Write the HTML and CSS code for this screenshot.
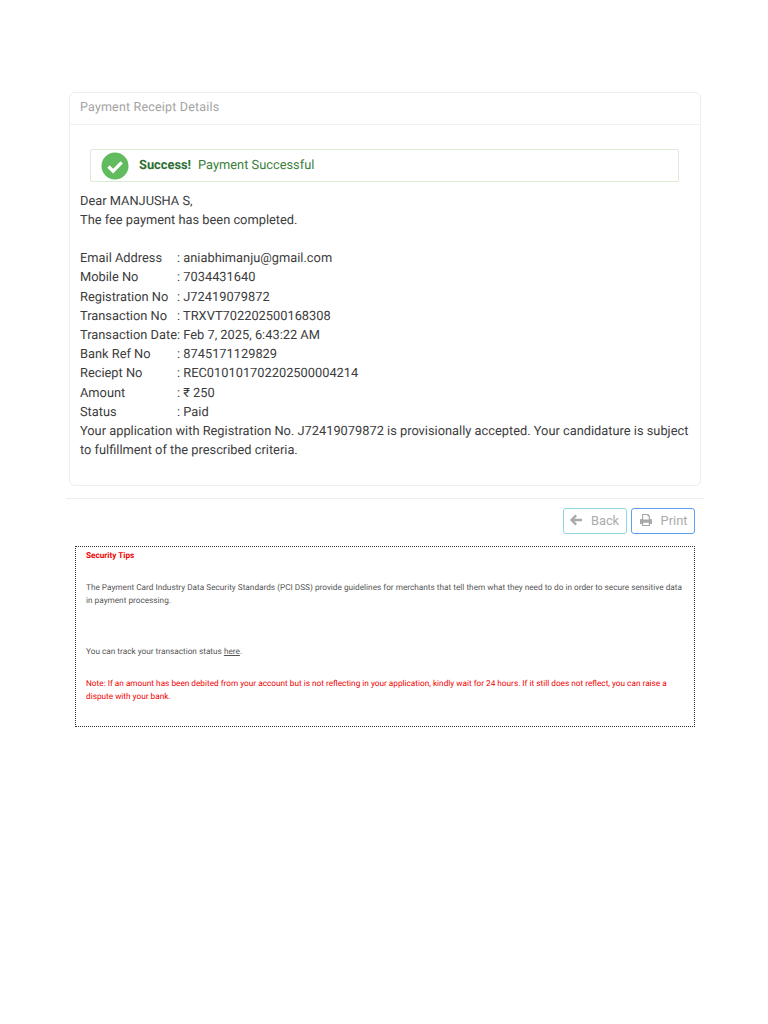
FILE: index.html
```html
<!DOCTYPE html>
<html lang="en">
<head>
<meta charset="utf-8">
<title>Payment Receipt Details</title>
<link rel="stylesheet" href="styles.css">
</head>
<body>
<main class="page">
  <section class="card">
    <h1 class="card-header">Payment Receipt Details</h1>
    <div class="card-body">
      <div class="alert">
        <svg class="alert-icon" viewBox="0 0 28 28" aria-hidden="true"><circle cx="14" cy="14" r="13.5" fill="#62bb5f"/><path d="M7.5 14.5l4.600 4.600 8.600-8.800" fill="none" stroke="#fff" stroke-width="3.2"/></svg>
        <strong>Success!</strong>
        <span>Payment Successful</span>
      </div>
      <p class="line">Dear MANJUSHA S,</p>
      <p class="line">The fee payment has been completed.</p>
      <p class="line">&nbsp;</p>
      <dl class="details">
        <div class="row"><dt>Email Address</dt><dd>: aniabhimanju@gmail.com</dd></div>
        <div class="row"><dt>Mobile No</dt><dd>: 7034431640</dd></div>
        <div class="row"><dt>Registration No</dt><dd>: J72419079872</dd></div>
        <div class="row"><dt>Transaction No</dt><dd>: TRXVT702202500168308</dd></div>
        <div class="row"><dt>Transaction Date</dt><dd>: Feb 7, 2025, 6:43:22 AM</dd></div>
        <div class="row"><dt>Bank Ref No</dt><dd>: 8745171129829</dd></div>
        <div class="row"><dt>Reciept No</dt><dd>: REC010101702202500004214</dd></div>
        <div class="row"><dt>Amount</dt><dd>: ₹ 250</dd></div>
        <div class="row"><dt>Status</dt><dd>: Paid</dd></div>
      </dl>
      <p class="line">Your application with Registration No. J72419079872 is provisionally accepted. Your candidature is subject to fulfillment of the prescribed criteria.</p>
    </div>
  </section>
  <hr class="divider">
  <div class="actions">
    <button class="btn btn-back" type="button">
      <svg class="btn-icon" viewBox="0 0 14 14" aria-hidden="true"><path d="M6.300 1.500 1 7l5.300 5.500 1.700-1.700-2.600-2.500H13V5.700H5.400L8 3.200z" fill="#a9a9a9"/></svg>
      <span>Back</span>
    </button>
    <button class="btn btn-print" type="button">
      <svg class="btn-icon" viewBox="0 0 14 14" aria-hidden="true"><path fill="#a9a9a9" fill-rule="evenodd" d="M3 1h6.200L11 2.800V6h1.200c.5 0 .8.400.8.800V11h-2v2H3v-2H1V6.800c0-.4.300-.8.800-.8H3zm1.200 1.100V6.400h5.600V3.400H8.500V2.100zM4.200 9.800v2.100h5.600V9.800z"/></svg>
      <span>Print</span>
    </button>
  </div>
  <section class="tips">
    <h2 class="tips-title">Security Tips</h2>
    <p class="tips-text tips-gap-a">The Payment Card Industry Data Security Standards (PCI DSS) provide guidelines for merchants that tell them what they need to do in order to secure sensitive data in payment processing.</p>
    <p class="tips-text tips-gap-b">You can track your transaction status <a href="#">here</a>.</p>
    <p class="tips-text tips-note">Note: If an amount has been debited from your account but is not reflecting in your application, kindly wait for 24 hours. If it still does not reflect, you can raise a dispute with your bank.</p>
  </section>
</main>
</body>
</html>
```

FILE: styles.css
```css
* { box-sizing: border-box; }
html, body { margin: 0; background: #fff; }
body {
  font-family: Roboto, "Liberation Sans", sans-serif;
  font-size: 12.84px;
  line-height: 19.2px;
  color: #3c3c3c;
  text-rendering: geometricPrecision;
}
.page { padding: 92px 64px 0 66px; }
.card {
  margin: 0 3px;
  height: 394px;
  border: 1px solid #eeeeee;
  border-radius: 6px;
}
.card-header {
  margin: 0;
  height: 32px;
  padding: 0 10px;
  font-size: 12.5px;
  font-weight: 400;
  line-height: 29px;
  letter-spacing: .18px;
  color: #a3a3a3;
  border-bottom: 1px solid #f0f0f0;
}
.card-body { padding: 24px 10px 0; }
.alert {
  display: flex;
  align-items: center;
  height: 33px;
  margin: 0 11px 9.5px 10px;
  padding-left: 10px;
  border: 1px solid #dcebd4;
  border-radius: 2px;
  color: #38803a;
}
.alert-icon { width: 28px; height: 28px; margin-right: 10px; flex: none; }
.alert strong { margin-right: 7px; color: #2c6e30; font-weight: 700; }
.line { margin: 0; }
.details { margin: 0; }
.row { display: flex; }
.row dt { width: 97px; flex: none; white-space: nowrap; }
.row dd { margin: 0; }
.divider {
  height: 1px;
  margin: 12px 0 9px;
  border: 0;
  background: #eeeeee;
}
.actions { display: flex; justify-content: flex-end; gap: 4px; margin-right: 9px; }
.btn {
  display: flex;
  align-items: center;
  justify-content: center;
  gap: 8px;
  width: 64px;
  height: 26px;
  padding: 0 0 2px;
  background: #fff;
  border-radius: 3px;
  font: 12.84px Roboto, "Liberation Sans", sans-serif;
  color: #ababab;
}
.btn-back { border: 1px solid #8fd6e0; padding-right: 2px; }
.btn-print { border: 1px solid #5a9ff0; }
.btn-icon { width: 14px; height: 14px; flex: none; }
.tips {
  height: 181px;
  margin: 12px 9px 0;
  padding: 4px 10px 0;
  border: 1px dotted #333;
  font-size: 8.24px;
  line-height: 13px;
  color: #555;
}
.tips-title { margin: 0; font-size: 8.2px; line-height: 11px; font-weight: 700; color: #f00000; }
.tips-text { margin: 0; }
.tips-gap-a { margin-top: 20px; }
.tips-gap-b { margin-top: 38px; }
.tips-gap-b a { color: inherit; }
.tips-note { margin-top: 19px; color: #f00000; }
```
